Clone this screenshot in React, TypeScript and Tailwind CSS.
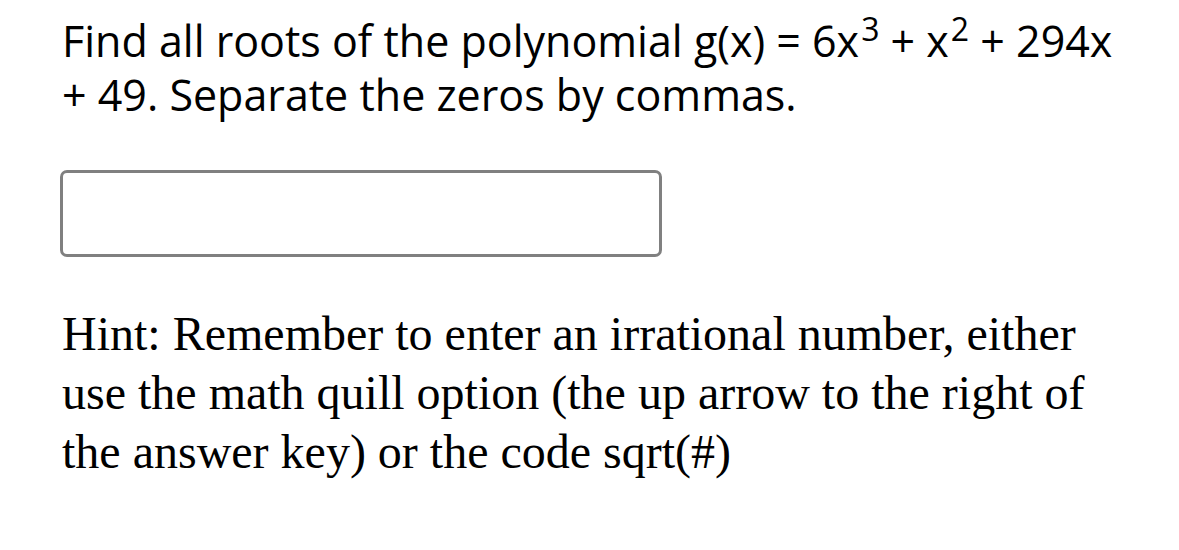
export default function App() {
  return (
    <div className="min-h-[550px] w-[1179px] bg-white text-black">
      <div className="pl-[62px] pr-4 pt-[14px]">
        <p className="font-['Open_Sans',sans-serif] text-[43px] leading-[54px] whitespace-nowrap">
          Find all roots of the polynomial g(x) = 6x
          <sup className="ml-[2px] text-[32px] leading-none">3</sup> + x
          <sup className="ml-[2px] text-[32px] leading-none">2</sup> + 294x
          <br />+ 49. Separate the zeros by commas.
        </p>
        <div className="-ml-[2px] mt-[48px] h-[87px] w-[602px] rounded-[7px] border-[3px] border-[#808080]" />
        <p className="mt-[47px] max-w-[1050px] font-['Liberation_Serif',serif] text-[48px] leading-[59px]">
          Hint: Remember to enter an irrational number, either use the math quill option (the up
          arrow to the right of the answer key) or the code sqrt(#)
        </p>
      </div>
    </div>
  );
}
